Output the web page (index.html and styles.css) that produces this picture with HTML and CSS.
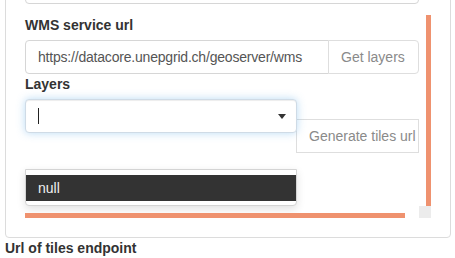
FILE: index.html
```html
<!DOCTYPE html>
<html>
<head>
<meta charset="utf-8">
<link rel="stylesheet" href="styles.css">
</head>
<body>
<div class="panel">
  <div class="scroller">
    <div class="content">
      <div class="input top-input"></div>
      <label class="lbl lbl-first">WMS service url</label>
      <div class="input-group">
        <div class="input url-input">https://datacore.unepgrid.ch/geoserver/wms</div>
        <div class="btn get-btn">Get layers</div>
      </div>
      <label class="lbl">Layers</label>
      <div class="select-row">
        <div class="select">
          <span class="cursor"></span>
          <span class="caret"></span>
        </div>
        <div class="btn gen-btn">Generate tiles url</div>
      </div>
      <div class="menu">
        <div class="menu-item">null</div>
      </div>
    </div>
    <div class="vtrack"><div class="vthumb"></div></div>
    <div class="htrack"><div class="hthumb"></div></div>
    <div class="corner"></div>
  </div>
</div>
<label class="lbl lbl-bottom">Url of tiles endpoint</label>
</body>
</html>
```

FILE: styles.css
```css
html, body {
  margin: 0;
  padding: 0;
  background: #fff;
  font-family: "Liberation Sans", Arial, sans-serif;
  font-size: 14px;
  color: #333;
  overflow: hidden;
}

.panel {
  margin: -46px 0 0 5px;
  width: 406px;
  padding: 15px 19px 19px 19px;
  border: 1px solid #dcdcdc;
  border-radius: 4px;
}

.scroller {
  display: grid;
  grid-template-columns: 394px 12px;
  grid-template-rows: auto 12px;
}

.content {
  grid-column: 1;
  grid-row: 1;
  display: flex;
  flex-direction: column;
}

.lbl {
  display: block;
  font-weight: bold;
  line-height: 20px;
  margin-bottom: 5px;
  color: #333;
}

.lbl-first {
  margin-top: 11px;
}

.lbl-bottom {
  margin: 0 0 0 5px;
}

.input {
  box-sizing: border-box;
  height: 34px;
  border: 1px solid #d6d6d6;
  border-radius: 4px;
  padding: 0 12px;
  line-height: 32px;
  color: #555;
  background: #fff;
  white-space: nowrap;
  overflow: hidden;
}

.input-group {
  display: flex;
}

.url-input {
  flex: 1;
  border-radius: 4px 0 0 4px;
  letter-spacing: -0.2px;
}

.btn {
  box-sizing: border-box;
  height: 34px;
  border: 1px solid #dedede;
  background: #fff;
  color: #8a8a8a;
  line-height: 32px;
  white-space: nowrap;
  overflow: hidden;
}

.get-btn {
  width: 91px;
  margin-left: -1px;
  padding: 0 12px;
  border-radius: 0 4px 4px 0;
}

.select-row {
  display: flex;
  align-items: flex-start;
}

.select {
  box-sizing: border-box;
  width: 272px;
  height: 34px;
  border: 1px solid #cfdbe6;
  border-radius: 4px;
  background: #fff;
  box-shadow: inset 0 1px 1px rgba(0,0,0,.075), 0 0 8px rgba(102,175,233,.45);
  display: flex;
  align-items: center;
  padding: 0 12px;
  position: relative;
  z-index: 1;
}

.cursor {
  width: 1px;
  height: 16px;
  background: #222;
}

.caret {
  margin-left: auto;
  width: 0;
  height: 0;
  border-left: 4px solid transparent;
  border-right: 4px solid transparent;
  border-top: 5px solid #333;
  margin-right: -2px;
  margin-top: 1px;
}

.gen-btn {
  width: 123px;
  margin-top: 20px;
  margin-left: -1px;
  padding: 0 0 0 12px;
  border-radius: 0;
}

.menu {
  box-sizing: border-box;
  width: 272px;
  margin-top: 16px;
  border: 1px solid #d4d4d4;
  border-radius: 0 0 4px 4px;
  padding: 5px 0 4px 0;
  background: #fff;
  box-shadow: 0 3px 8px rgba(0,0,0,.12);
}

.menu-item {
  height: 26px;
  line-height: 26px;
  background: #333;
  color: #f0f0f0;
  padding: 0 12px;
}

.vtrack {
  grid-column: 2;
  grid-row: 1;
  display: flex;
  justify-content: flex-end;
}

.vthumb {
  width: 5px;
  margin-top: 45px;
  background: #ef926f;
}

.htrack {
  grid-column: 1;
  grid-row: 2;
  display: flex;
  align-items: flex-end;
}

.hthumb {
  width: 380px;
  height: 5px;
  background: #ef926f;
}

.corner {
  grid-column: 2;
  grid-row: 2;
  background: #ececec;
}
```
